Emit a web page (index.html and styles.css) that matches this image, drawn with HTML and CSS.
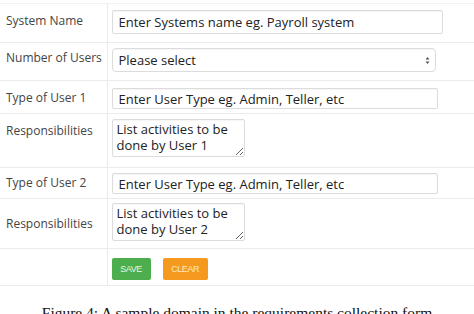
FILE: index.html
```html
<!DOCTYPE html>
<html lang="en">
<head>
    <meta charset="UTF-8">
    <meta name="viewport" content="width=device-width, initial-scale=1.0">
    <title>Requirements Collection Form</title>
    <link rel="stylesheet" href="styles.css">
</head>
<body>
    <table class="form-table">
        <tr class="row-name">
            <td class="label">System Name</td>
            <td class="field"><input class="input input-wide" type="text" value="Enter Systems name eg. Payroll system"></td>
        </tr>
        <tr class="row-users">
            <td class="label">Number of Users</td>
            <td class="field">
                <div class="select">
                    <span>Please select</span>
                    <svg class="arrows" width="5" height="9" viewBox="0 0 5 9">
                        <path d="M0.5 3.5 L2.5 1 L4.5 3.5 Z M0.5 5.5 L2.5 8 L4.5 5.5 Z" fill="#555"/>
                    </svg>
                </div>
            </td>
        </tr>
        <tr class="row-type">
            <td class="label">Type of User 1</td>
            <td class="field"><input class="input" type="text" value="Enter User Type eg. Admin, Teller, etc"></td>
        </tr>
        <tr class="row-resp">
            <td class="label">Responsibilities</td>
            <td class="field"><textarea class="textarea" wrap="off">List activities to be
done by User 1</textarea></td>
        </tr>
        <tr class="row-type2">
            <td class="label">Type of User 2</td>
            <td class="field"><input class="input" type="text" value="Enter User Type eg. Admin, Teller, etc"></td>
        </tr>
        <tr class="row-resp2">
            <td class="label label-mid">Responsibilities</td>
            <td class="field"><textarea class="textarea" wrap="off">List activities to be
done by User 2</textarea></td>
        </tr>
        <tr class="row-actions">
            <td class="label"></td>
            <td class="field">
                <button class="btn btn-save">SAVE</button>
                <button class="btn btn-clear">CLEAR</button>
            </td>
        </tr>
    </table>

    <p class="caption">Figure 4: A sample domain in the requirements collection form</p>
</body>
</html>
```

FILE: styles.css
```css
body {
    margin: 0;
    padding-top: 3px;
    background: #fff;
    font-family: 'Open Sans', sans-serif;
    color: #333;
}

.form-table {
    width: 100%;
    border-collapse: collapse;
    border-top: 1px solid #f2f2f2;
}

.form-table tr {
    border-bottom: 1px solid #ebebeb;
}

.form-table td {
    vertical-align: top;
    padding: 0;
}

.label {
    width: 107px;
    box-sizing: border-box;
    border-right: 1px solid #ebebeb;
    padding: 9px 0 0 6px !important;
    font-size: 12px;
    line-height: 16px;
    color: #444;
    white-space: nowrap;
}

.label-mid {
    vertical-align: middle !important;
    padding-top: 0 !important;
}

.field {
    padding-left: 4px !important;
}

.row-name { height: 39px; }
.row-users { height: 38px; }
.row-type { height: 33px; }
.row-resp { height: 54px; }
.row-type2 { height: 31px; }
.row-resp2 { height: 50px; }
.row-actions { height: 37px; }

.row-name .field { padding-top: 6px !important; }
.row-users .field { padding-top: 5px !important; }
.row-type .field { padding-top: 7px !important; }
.row-resp .field { padding-top: 5px !important; }
.row-type2 .field { padding-top: 5px !important; }
.row-resp2 .field { padding-top: 4px !important; }
.row-actions .field { padding-top: 9px !important; }

.row-users .label { padding-top: 7px !important; }
.row-type2 .label { padding-top: 7px !important; }

.input,
.select,
.textarea {
    box-sizing: border-box;
    display: block;
    border: 1px solid #dcdcdc;
    border-radius: 2px;
    box-shadow: inset 0 1px 1px rgba(0, 0, 0, 0.04);
    background: #fff;
    font-family: 'Open Sans', sans-serif;
    font-size: 13px;
    color: #222;
    margin: 0;
}

.input {
    width: 326px;
    height: 21px;
    padding: 0 6px;
}

.input-wide {
    width: 331px;
    height: 24px;
}

.select {
    width: 324px;
    height: 24px;
    padding: 0 5px 0 6px;
    display: flex;
    align-items: center;
    justify-content: space-between;
    border-radius: 4px;
}

.textarea {
    width: 133px;
    height: 38px;
    padding: 1px 4px;
    line-height: 16px;
    resize: both;
    overflow: hidden;
}

.btn {
    height: 22px;
    border: none;
    border-radius: 2px;
    font-family: 'Liberation Sans Narrow', 'Liberation Sans', sans-serif;
    font-size: 9px;
    letter-spacing: -0.4px;
    padding: 0;
    margin: 0;
    vertical-align: top;
}

.btn-save {
    width: 39px;
    background: #4cae4c;
    color: #eaf7e4;
}

.btn-clear {
    width: 45px;
    margin-left: 8px;
    background: #f59a1f;
    color: #fde9b8;
}

.caption {
    margin: 18px 0 0;
    text-align: center;
    font-family: 'Liberation Serif', serif;
    font-size: 15.5px;
    color: #111;
}
```
